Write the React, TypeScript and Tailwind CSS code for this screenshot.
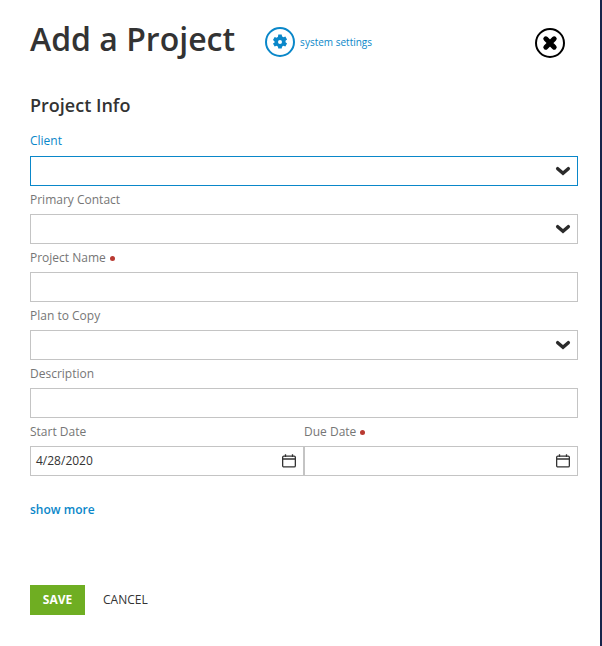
import React from 'react';

const font = { fontFamily: '"Open Sans", sans-serif' };

const Chevron = () => (
  <svg width="16" height="11" viewBox="0 0 16 11" className="text-[#2b2b2b]">
    <path d="M2.7 2.7 L8 7.3 L13.3 2.7" fill="none" stroke="currentColor" strokeWidth="3.5" strokeLinecap="round" strokeLinejoin="miter" />
  </svg>
);

const Calendar = () => (
  <svg width="16" height="16" viewBox="0 0 16 16" fill="none" stroke="#333333" strokeWidth="1.3">
    <rect x="1.65" y="3.15" width="12.7" height="10.7" rx="1.2" />
    <path d="M1.65 6 H14.35" strokeWidth="1.5" />
    <path d="M4.5 1.2 V4 M11.5 1.2 V4" />
  </svg>
);

const Dot = () => <span className="ml-[4px] inline-block h-[5px] w-[5px] rounded-full bg-[#b93a32]" />;

type FieldProps = {
  label: string;
  required?: boolean;
  active?: boolean;
  children?: React.ReactNode;
  className?: string;
};

const Field = ({ label, required, active, children, className }: FieldProps) => (
  <div className={className}>
    <div className={`flex h-[28px] items-center text-[12px] ${active ? 'pb-[2px] text-[#0a87c9]' : 'text-[#767676]'}`}>
      {label}
      {required && <Dot />}
    </div>
    <div className={`flex h-[30px] items-center justify-between border pl-[5px] ${active ? 'border-[#0a87c9]' : 'border-[#c4c4c4]'}`}>
      {children}
    </div>
  </div>
);

const SelectField = (props: FieldProps) => (
  <Field {...props}>
    <span />
    <span className="mr-[6px] flex"><Chevron /></span>
  </Field>
);

export default function App() {
  return (
    <div className="flex h-[646px] w-[602px] bg-white" style={font}>
      <div className="w-[600px] pl-[30px] pr-[22px]">
        <div className="flex h-[84px] items-start">
          <h1 className="mt-[16px] text-[32px] font-semibold leading-[46px] text-[#333333]">Add a Project</h1>
          <div className="ml-[30px] mt-[27px] flex items-center">
            <span className="flex h-[30px] w-[30px] items-center justify-center rounded-full border-2 border-[#0a87c9]">
              <svg width="16" height="16" viewBox="0 0 16 16">
                <path
                  fill="#0a87c9"
                  fillRule="evenodd"
                  d="M6.3 0.4h3.4l.4 2a5.2 5.2 0 0 1 1.3.75l1.95-.65 1.7 2.9-1.55 1.35a5.2 5.2 0 0 1 0 1.5l1.55 1.35-1.7 2.9-1.95-.65a5.2 5.2 0 0 1-1.3.75l-.4 2H6.3l-.4-2a5.2 5.2 0 0 1-1.3-.75l-1.95.65-1.7-2.9L2.5 8.75a5.2 5.2 0 0 1 0-1.5L.95 5.9l1.7-2.9 1.95.65a5.2 5.2 0 0 1 1.3-.75zM8 6a2 2 0 1 0 0 4 2 2 0 0 0 0-4z"
                />
              </svg>
            </span>
            <span className="ml-[5px] text-[10px] text-[#0a87c9]">system settings</span>
          </div>
          <span className="ml-auto mr-[13px] mt-[28px] flex h-[30px] w-[30px] items-center justify-center rounded-full border-2 border-black">
            <svg width="16" height="16" viewBox="0 0 16 16">
              <path d="M3.8 3.8 L12.2 12.2 M12.2 3.8 L3.8 12.2" stroke="#000" strokeWidth="5" strokeLinecap="round" />
            </svg>
          </span>
        </div>

        <h2 className="h-[30px] text-[18px] font-semibold leading-[42px] text-[#333333]">Project Info</h2>

        <div className="mt-[14px]">
          <SelectField label="Client" active />
          <SelectField label="Primary Contact" />
          <Field label="Project Name" required />
          <SelectField label="Plan to Copy" />
          <Field label="Description" />
          <div className="flex">
            <Field label="Start Date" className="w-[274px]">
              <span className="text-[12px] text-[#333333]">4/28/2020</span>
              <span className="mr-[6px] flex"><Calendar /></span>
            </Field>
            <Field label="Due Date" required className="w-[274px]">
              <span />
              <span className="mr-[6px] flex"><Calendar /></span>
            </Field>
          </div>
        </div>

        <a className="mt-[24px] block text-[12px] font-semibold leading-[20px] text-[#0a87c9]">show more</a>

        <div className="mt-[65px] flex items-center">
          <button className="h-[30px] w-[55px] bg-[#6fae22] text-[12px] font-bold text-white">SAVE</button>
          <button className="ml-[18px] text-[12px] text-[#333333]">CANCEL</button>
        </div>
      </div>
      <div className="w-[2px] bg-[#17244a]" />
    </div>
  );
}
